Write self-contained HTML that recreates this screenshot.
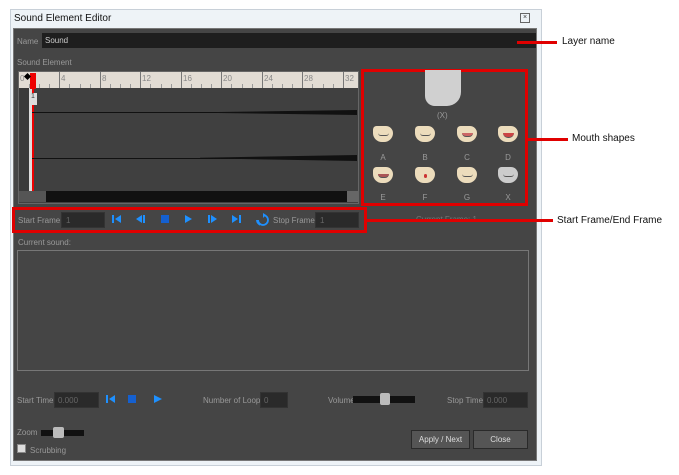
<!DOCTYPE html>
<html><head><style>
*{margin:0;padding:0;box-sizing:border-box}
body{width:679px;height:475px;background:#fff;position:relative;overflow:hidden;font-family:"Liberation Sans",sans-serif;font-size:8px;color:#999}
.a{position:absolute}
.f{background:#2a2a2a;border:1px solid #333}
.red{border:3px solid #e00000}
.rl{position:absolute;height:3px;background:#e00000}
.ann{position:absolute;color:#111;font-size:10px}
.face{position:absolute;width:20px;height:16px;background:#ecdcbc;border-radius:4px 8px 10px 10px}
.face i{position:absolute;left:5px;top:7px;width:11px;height:3px;border-bottom:1px solid #555;border-radius:0 0 6px 6px}
.lab{position:absolute;font-size:8px;color:#999;width:20px;text-align:center}
</style></head><body>
<div class="a" style="left:10px;top:9px;width:532px;height:457px;background:#eef3f7;border:1px solid #c8d0d8"></div>
<div class="a" style="left:14px;top:13px;font-size:10px;color:#111">Sound Element Editor</div>
<div class="a" style="left:520px;top:13px;width:10px;height:10px;border:1px solid #666;font-size:7px;color:#333;text-align:center;line-height:8px">×</div>
<div class="a" style="left:13px;top:28px;width:524px;height:433px;background:#454545;border:1px solid #777"></div>
<div class="a" style="left:17px;top:37px">Name</div>
<div class="a" style="left:42px;top:33px;width:494px;height:15px;background:#1e1e1e;color:#ccc;padding:3px 3px;font-size:8px">Sound</div>
<div class="a" style="left:17px;top:58px">Sound Element</div>
<!-- timeline -->
<div class="a" style="left:18px;top:71px;width:341px;height:133px;background:#404040;border:1px solid #666"></div>
<div class="a" style="left:19px;top:72px;width:339px;height:16px;background:#e2dcd4"></div>
<svg class="a" style="left:19px;top:72px" width="339" height="16">
<g stroke="#777" stroke-width="1">
<line x1="40.5" y1="0" x2="40.5" y2="16"/><line x1="81.5" y1="0" x2="81.5" y2="16"/><line x1="121.5" y1="0" x2="121.5" y2="16"/><line x1="162.5" y1="0" x2="162.5" y2="16"/><line x1="202.5" y1="0" x2="202.5" y2="16"/><line x1="243.5" y1="0" x2="243.5" y2="16"/><line x1="283.5" y1="0" x2="283.5" y2="16"/><line x1="324.5" y1="0" x2="324.5" y2="16"/>
<g stroke="#999"><line x1="10.5" y1="12" x2="10.5" y2="16"/><line x1="20.5" y1="12" x2="20.5" y2="16"/><line x1="30.5" y1="12" x2="30.5" y2="16"/><line x1="50.5" y1="12" x2="50.5" y2="16"/><line x1="61.5" y1="12" x2="61.5" y2="16"/><line x1="71.5" y1="12" x2="71.5" y2="16"/><line x1="91.5" y1="12" x2="91.5" y2="16"/><line x1="101.5" y1="12" x2="101.5" y2="16"/><line x1="111.5" y1="12" x2="111.5" y2="16"/><line x1="131.5" y1="12" x2="131.5" y2="16"/><line x1="142.5" y1="12" x2="142.5" y2="16"/><line x1="152.5" y1="12" x2="152.5" y2="16"/><line x1="172.5" y1="12" x2="172.5" y2="16"/><line x1="182.5" y1="12" x2="182.5" y2="16"/><line x1="192.5" y1="12" x2="192.5" y2="16"/><line x1="212.5" y1="12" x2="212.5" y2="16"/><line x1="223.5" y1="12" x2="223.5" y2="16"/><line x1="233.5" y1="12" x2="233.5" y2="16"/><line x1="253.5" y1="12" x2="253.5" y2="16"/><line x1="263.5" y1="12" x2="263.5" y2="16"/><line x1="273.5" y1="12" x2="273.5" y2="16"/><line x1="293.5" y1="12" x2="293.5" y2="16"/><line x1="304.5" y1="12" x2="304.5" y2="16"/><line x1="314.5" y1="12" x2="314.5" y2="16"/></g>
</g>
<g font-size="8" fill="#888" font-family="Liberation Sans"><text x="1" y="9">0</text><text x="42" y="9">4</text><text x="83" y="9">8</text><text x="123" y="9">12</text><text x="164" y="9">16</text><text x="204" y="9">20</text><text x="245" y="9">24</text><text x="285" y="9">28</text><text x="326" y="9">32</text></g>
</svg>
<div class="a" style="left:19px;top:88px;width:10px;height:103px;background:#3a3a3a"></div>
<div class="a" style="left:29px;top:88px;width:3px;height:103px;background:#ddd"></div>
<div class="a" style="left:32px;top:73px;width:2px;height:118px;background:#e00"></div>
<div class="a" style="left:30px;top:73px;width:6px;height:16px;background:#e00"></div>
<div class="a" style="left:25px;top:74px;width:5px;height:5px;background:#000;transform:rotate(45deg)"></div>
<div class="a" style="left:31px;top:93px;width:6px;height:12px;background:#ddd;color:#333;font-size:7px">1</div>
<div class="a" style="left:32px;top:112px;width:325px;height:1px;background:#111"></div>
<div class="a" style="left:32px;top:158px;width:325px;height:1px;background:#111"></div>
<div class="a" style="left:200px;top:110px;width:157px;height:5px;background:#111;clip-path:polygon(0 45%,100% 0,100% 100%,0 55%)"></div>
<div class="a" style="left:200px;top:155px;width:157px;height:6px;background:#111;clip-path:polygon(0 45%,100% 0,100% 100%,0 55%)"></div>
<div class="a" style="left:19px;top:191px;width:339px;height:11px;background:#111"></div>
<div class="a" style="left:19px;top:191px;width:27px;height:11px;background:#555"></div>
<div class="a" style="left:347px;top:191px;width:11px;height:11px;background:#666"></div>
<!-- mouth box -->
<div class="a red" style="left:361px;top:69px;width:167px;height:137px"></div>
<div class="a" style="left:425px;top:70px;width:36px;height:36px;background:#d0d0d0;border-radius:0 0 14px 10px"></div>
<div class="a" style="left:437px;top:111px;font-size:8px">(X)</div>
<div class="face" style="left:373px;top:126px"><i></i></div>
<div class="face" style="left:415px;top:126px"><i></i></div>
<div class="face" style="left:457px;top:126px"><i style="background:#c66;height:4px"></i></div>
<div class="face" style="left:498px;top:126px"><i style="background:#c44;height:5px"></i></div>
<div class="lab" style="left:373px;top:153px">A</div><div class="lab" style="left:415px;top:153px">B</div><div class="lab" style="left:457px;top:153px">C</div><div class="lab" style="left:498px;top:153px">D</div>
<div class="face" style="left:373px;top:167px"><i style="background:#a55;height:4px"></i></div>
<div class="face" style="left:415px;top:167px"><i style="left:9px;width:3px;height:4px;background:#c33;border:none;border-radius:2px"></i></div>
<div class="face" style="left:457px;top:167px"><i></i></div>
<div class="face" style="left:498px;top:167px;background:#ccc"><i></i></div>
<div class="lab" style="left:373px;top:193px">E</div><div class="lab" style="left:415px;top:193px">F</div><div class="lab" style="left:457px;top:193px">G</div><div class="lab" style="left:498px;top:193px">X</div>
<div class="a" style="left:416px;top:215px;color:#777">Current Frame: 1</div>
<!-- control row -->
<div class="a red" style="left:12px;top:207px;width:355px;height:26px"></div>
<div class="a" style="left:18px;top:216px">Start Frame</div>
<div class="a f" style="left:61px;top:212px;width:44px;height:16px;color:#666;padding:3px 4px">1</div>
<svg class="a" style="left:110px;top:213px" width="150" height="14" fill="#1e90ff">
<rect x="2" y="2" width="2" height="8"/><polygon points="11,2 11,10 5,6"/>
<polygon points="32,2 32,10 26,6"/><rect x="33" y="2" width="2" height="8"/>
<rect x="51" y="2" width="8" height="8" fill="#1560d0"/>
<polygon points="75,2 75,10 82,6"/>
<rect x="98" y="2" width="2" height="8"/><polygon points="101,2 101,10 107,6"/>
<polygon points="122,2 122,10 128,6"/><rect x="129" y="2" width="2" height="8"/>
<path d="M152 2 A5 5 0 1 1 147 7" fill="none" stroke="#1e90ff" stroke-width="1.8"/>
</svg>
<svg class="a" style="left:256px;top:213px" width="14" height="14"><path d="M7 2 A5 5 0 1 1 2 7" fill="none" stroke="#1e90ff" stroke-width="1.8"/><polygon points="7,0 7,5 10,2" fill="#1e90ff"/></svg>
<div class="a" style="left:273px;top:216px">Stop Frame</div>
<div class="a f" style="left:315px;top:212px;width:44px;height:16px;color:#666;padding:3px 4px">1</div>
<div class="a" style="left:18px;top:238px">Current sound:</div>
<div class="a" style="left:17px;top:250px;width:512px;height:121px;border:1px solid #777;background:#454545"></div>
<!-- bottom -->
<div class="a" style="left:17px;top:396px">Start Time</div>
<div class="a f" style="left:54px;top:392px;width:45px;height:16px;color:#666;padding:3px 3px">0.000</div>
<svg class="a" style="left:104px;top:393px" width="64" height="14" fill="#1e90ff">
<rect x="2" y="2" width="2" height="8"/><polygon points="11,2 11,10 5,6"/>
<rect x="24" y="2" width="8" height="8" fill="#1560d0"/>
<polygon points="50,2 50,10 58,6"/>
</svg>
<div class="a" style="left:203px;top:396px">Number of Loops:</div>
<div class="a f" style="left:260px;top:392px;width:28px;height:16px;color:#666;padding:3px 3px">0</div>
<div class="a" style="left:328px;top:396px">Volume</div>
<div class="a" style="left:353px;top:396px;width:62px;height:7px;background:#111"></div>
<div class="a" style="left:380px;top:393px;width:10px;height:12px;background:#bbb;border-radius:2px"></div>
<div class="a" style="left:447px;top:396px">Stop Time</div>
<div class="a f" style="left:483px;top:392px;width:45px;height:16px;color:#666;padding:3px 3px">0.000</div>
<div class="a" style="left:17px;top:428px">Zoom</div>
<div class="a" style="left:41px;top:430px;width:43px;height:6px;background:#111"></div>
<div class="a" style="left:53px;top:427px;width:11px;height:11px;background:#bbb;border-radius:2px"></div>
<div class="a" style="left:17px;top:444px;width:9px;height:9px;background:#ddd;border:1px solid #888"></div>
<div class="a" style="left:30px;top:446px">Scrubbing</div>
<div class="a" style="left:411px;top:430px;width:59px;height:19px;background:#555;border:1px solid #2a2a2a;color:#ddd;text-align:center;line-height:17px">Apply / Next</div>
<div class="a" style="left:473px;top:430px;width:55px;height:19px;background:#555;border:1px solid #2a2a2a;color:#ddd;text-align:center;line-height:17px">Close</div>
<!-- annotations -->
<div class="rl" style="left:517px;top:41px;width:40px"></div>
<div class="ann" style="left:562px;top:36px">Layer name</div>
<div class="rl" style="left:528px;top:138px;width:40px"></div>
<div class="ann" style="left:572px;top:133px">Mouth shapes</div>
<div class="rl" style="left:366px;top:219px;width:187px"></div>
<div class="ann" style="left:557px;top:215px">Start Frame/End Frame</div>
</body></html>
